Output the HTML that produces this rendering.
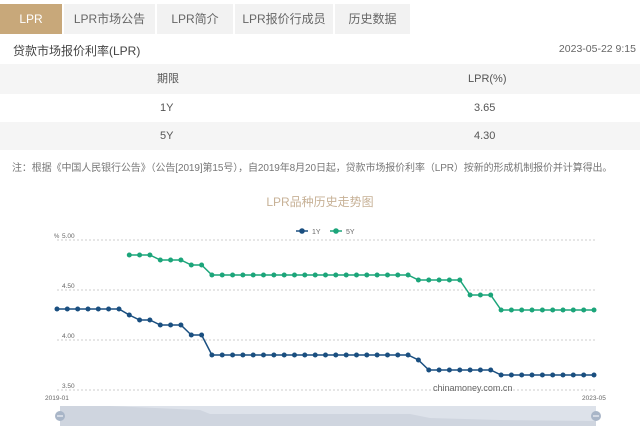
<!DOCTYPE html>
<html><head><meta charset="utf-8">
<style>
*{margin:0;padding:0;box-sizing:border-box}
body{width:640px;height:436px;background:#fff;font-family:"Liberation Sans","Noto Sans CJK SC",sans-serif;color:#333;position:relative;overflow:hidden}
.tabs{position:absolute;top:4px;left:0;height:30px;display:flex}
.tab{height:30px;line-height:30px;font-size:12px;color:#666;background:#f2f2f2;margin-right:2px;text-align:center}
.tab.on{background:#c8a87a;color:#fff}
.title{position:absolute;top:42px;left:13px;font-size:12px;color:#444}
.date{position:absolute;top:43px;right:4px;font-size:10.5px;color:#666}
.row{position:absolute;left:0;width:640px;font-size:11px;color:#555}
.row span{position:absolute;top:0}
.note{position:absolute;top:159px;left:12px;font-size:10px;color:#777;white-space:nowrap;letter-spacing:-0.1px}
svg{position:absolute;left:0;top:0}
</style></head><body>
<div class="tabs">
<div class="tab on" style="width:62px">LPR</div>
<div class="tab" style="width:91px">LPR市场公告</div>
<div class="tab" style="width:76px">LPR简介</div>
<div class="tab" style="width:98px">LPR报价行成员</div>
<div class="tab" style="width:75px">历史数据</div>
</div>
<div class="title">贷款市场报价利率(LPR)</div>
<div class="date">2023-05-22 9:15</div>
<div class="row" style="top:64px;height:30px;line-height:30px;background:#f5f5f5"><span style="left:157px">期限</span><span style="left:468px">LPR(%)</span></div>
<div class="row" style="top:94px;height:28px;line-height:28px"><span style="left:160px">1Y</span><span style="left:474px">3.65</span></div>
<div class="row" style="top:122px;height:28px;line-height:28px;background:#f5f5f5"><span style="left:160px">5Y</span><span style="left:474px">4.30</span></div>
<div class="note">注：根据《中国人民银行公告》（公告[2019]第15号），自2019年8月20日起，贷款市场报价利率（LPR）按新的形成机制报价并计算得出。</div>
<svg width="640" height="436" id="c" font-family="Liberation Sans, Noto Sans CJK SC, sans-serif">
<text x="320" y="206" text-anchor="middle" font-size="12" fill="#c7b196">LPR品种历史走势图</text>
<line x1="296" y1="231" x2="308" y2="231" stroke="#1a4f80" stroke-width="1.5"/><circle cx="302" cy="231" r="2.8" fill="#1a4f80"/>
<text x="312" y="234" font-size="7" fill="#666">1Y</text>
<line x1="330" y1="231" x2="342" y2="231" stroke="#1ca57a" stroke-width="1.5"/><circle cx="336" cy="231" r="2.8" fill="#1ca57a"/>
<text x="346" y="234" font-size="7" fill="#666">5Y</text>
<text x="54" y="238" font-size="6" fill="#666">%</text>
<g stroke="#ccc" stroke-dasharray="2,2" stroke-width="1">
<line x1="57" y1="240" x2="596" y2="240"/><line x1="57" y1="290" x2="596" y2="290"/><line x1="57" y1="340" x2="596" y2="340"/><line x1="57" y1="390" x2="596" y2="390"/>
</g>
<g font-size="6.5" fill="#666">
<text x="62" y="238">5.00</text><text x="62" y="288">4.50</text><text x="62" y="338">4.00</text><text x="62" y="388">3.50</text>
<text x="45" y="400">2019-01</text><text x="582" y="400">2023-05</text>
</g>
<text x="433" y="391" font-size="9" fill="#666">chinamoney.com.cn</text>
<rect x="60" y="406" width="536" height="20" fill="#dde2ea"/>
<path d="M60 406 H110 L200 410 L210 414 L410 414 L430 418 L500 420 L596 421 V426 H60Z" fill="#cfd5df"/>
<circle cx="60" cy="416" r="5" fill="#a9b6c8"/><rect x="57" y="415.5" width="6" height="1" fill="#fff"/>
<circle cx="596" cy="416" r="5" fill="#a9b6c8"/><rect x="593" y="415.5" width="6" height="1" fill="#fff"/>
</svg>
<script>
var y1=[],y5=[];
function rep(a,v,n){for(var i=0;i<n;i++)a.push(v);}
rep(y1,4.31,7);rep(y1,4.25,1);rep(y1,4.20,2);rep(y1,4.15,3);rep(y1,4.05,2);rep(y1,3.85,20);rep(y1,3.80,1);rep(y1,3.70,7);rep(y1,3.65,10);
rep(y5,null,7);rep(y5,4.85,3);rep(y5,4.80,3);rep(y5,4.75,2);rep(y5,4.65,20);rep(y5,4.60,5);rep(y5,4.45,3);rep(y5,4.30,10);
var s=document.getElementById('c'),ns='http://www.w3.org/2000/svg';
function draw(a,col){var pts=[];for(var i=0;i<a.length;i++){if(a[i]==null)continue;var x=57+i*(537/52),y=240+(5-a[i])*100;pts.push(x.toFixed(1)+','+y.toFixed(1));}
var p=document.createElementNS(ns,'polyline');p.setAttribute('points',pts.join(' '));p.setAttribute('fill','none');p.setAttribute('stroke',col);p.setAttribute('stroke-width','1.5');s.appendChild(p);
pts.forEach(function(q){var c=document.createElementNS(ns,'circle');var xy=q.split(',');c.setAttribute('cx',xy[0]);c.setAttribute('cy',xy[1]);c.setAttribute('r','2.5');c.setAttribute('fill',col);s.appendChild(c);});}
draw(y1,'#1a4f80');draw(y5,'#1ca57a');
</script>
</body></html>
